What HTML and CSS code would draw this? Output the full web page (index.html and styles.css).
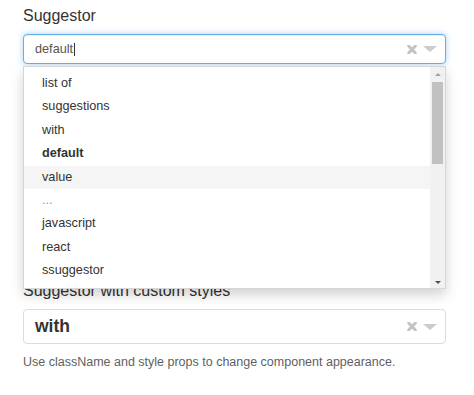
FILE: index.html
```html
<!DOCTYPE html>
<html lang="en">
<head>
<meta charset="utf-8">
<title>Suggestor</title>
<link rel="stylesheet" href="styles.css">
</head>
<body>
<div class="page">
  <section class="example">
    <label class="label">Suggestor</label>
    <div class="suggestor">
      <div class="control focused">
        <span class="value">default<span class="cursor"></span></span>
        <span class="icons">
          <svg class="clear" width="10" height="9" viewBox="0 0 10 9"><path d="M1.6 1.1 L8.4 7.9 M8.4 1.1 L1.6 7.9" stroke="#c2c2c2" stroke-width="2.8" stroke-linecap="round" fill="none"/></svg>
          <svg class="toggle" width="14" height="6" viewBox="0 0 14 6"><polygon points="0,0 14,0 7,6" fill="#cccccc"/></svg>
        </span>
      </div>
      <div class="menu">
        <ul class="list">
          <li class="item">list of</li>
          <li class="item">suggestions</li>
          <li class="item">with</li>
          <li class="item strong">default</li>
          <li class="item active">value</li>
          <li class="item muted">...</li>
          <li class="item">javascript</li>
          <li class="item">react</li>
          <li class="item">ssuggestor</li>
          <li class="item">component</li>
          <li class="item">autocomplete</li>
          <li class="item">select</li>
          <li class="item">input</li>
          <li class="item">list</li>
        </ul>
        <div class="scrollbar">
          <span class="sb-button"><span class="arrow up"></span></span>
          <span class="thumb"></span>
          <span class="sb-track"></span>
          <span class="sb-button"><span class="arrow down"></span></span>
        </div>
      </div>
    </div>
  </section>

  <section class="example custom">
    <label class="label">Suggestor with custom styles</label>
    <div class="suggestor">
      <div class="control">
        <span class="value">with</span>
        <span class="icons">
          <svg class="clear" width="10" height="9" viewBox="0 0 10 9"><path d="M1.6 1.1 L8.4 7.9 M8.4 1.1 L1.6 7.9" stroke="#c2c2c2" stroke-width="2.8" stroke-linecap="round" fill="none"/></svg>
          <svg class="toggle" width="14" height="6" viewBox="0 0 14 6"><polygon points="0,0 14,0 7,6" fill="#cccccc"/></svg>
        </span>
      </div>
    </div>
    <p class="help">Use className and style props to change component appearance.</p>
  </section>
</div>
</body>
</html>
```

FILE: styles.css
```css
body {
  margin: 0;
  background: #fff;
  color: #333;
  font-family: "Liberation Sans", Arial, Helvetica, sans-serif;
}

.page {
  padding: 6px 28px 0 23px;
}

.label {
  display: block;
  font-size: 16px;
  line-height: 20px;
  margin-bottom: 8px;
  color: #333;
}

.suggestor {
  position: relative;
}

.control {
  display: flex;
  align-items: center;
  height: 30px;
  box-sizing: border-box;
  padding: 0 8px 0 11px;
  border: 1px solid #d6d6d6;
  border-radius: 4px;
  background: #fff;
}

.control.focused {
  border-color: #66afe9;
  box-shadow: inset 0 1px 1px rgba(0, 0, 0, .075), 0 0 6px rgba(102, 175, 233, .55);
}

.value {
  flex: 1;
  display: flex;
  align-items: center;
  font-size: 12.7px;
  color: #555;
  white-space: nowrap;
}

.cursor {
  display: inline-block;
  width: 0;
  height: 13px;
  border-left: 1px solid #333;
  margin-left: 1px;
}

.icons {
  display: flex;
  align-items: center;
  gap: 6px;
}

.icons svg {
  display: block;
}

.menu {
  position: absolute;
  top: 32px;
  left: 0;
  right: 0;
  height: 223px;
  box-sizing: border-box;
  display: flex;
  border: 1px solid rgba(0, 0, 0, .16);
  background: #fff;
  box-shadow: 0 6px 12px rgba(0, 0, 0, .175);
  overflow: hidden;
  z-index: 10;
}

.list {
  flex: 1;
  margin: 0;
  padding: 5px 0 0;
  list-style: none;
  overflow: hidden;
}

.item {
  padding-left: 18px;
  line-height: 23.4px;
  height: 23.4px;
  font-size: 12.7px;
  color: #333;
  white-space: nowrap;
}

.item.strong {
  font-weight: bold;
}

.item.active {
  background: #f5f5f5;
}

.item.muted {
  color: #9a9a9a;
}

.scrollbar {
  width: 15px;
  display: flex;
  flex-direction: column;
  background: #f1f1f1;
}

.sb-button {
  height: 15px;
  display: flex;
  align-items: center;
  justify-content: center;
}

.arrow {
  width: 0;
  height: 0;
  border-left: 3px solid transparent;
  border-right: 3px solid transparent;
}

.arrow.up {
  border-bottom: 3.5px solid #a3a3a3;
}

.arrow.down {
  border-top: 3.5px solid #505050;
  margin-top: 3px;
}

.thumb {
  height: 82px;
  margin: 0 2px;
  background: #c1c1c1;
}

.sb-track {
  flex: 1;
}

.custom {
  margin-top: 217px;
}

.custom .control {
  height: 35px;
  border-color: #dcdcdc;
}

.custom .value {
  font-size: 17.5px;
  font-weight: bold;
  color: #333;
}

.help {
  margin: 10px 0 0;
  font-size: 12.5px;
  line-height: 17px;
  color: #5f5f5f;
}
```
